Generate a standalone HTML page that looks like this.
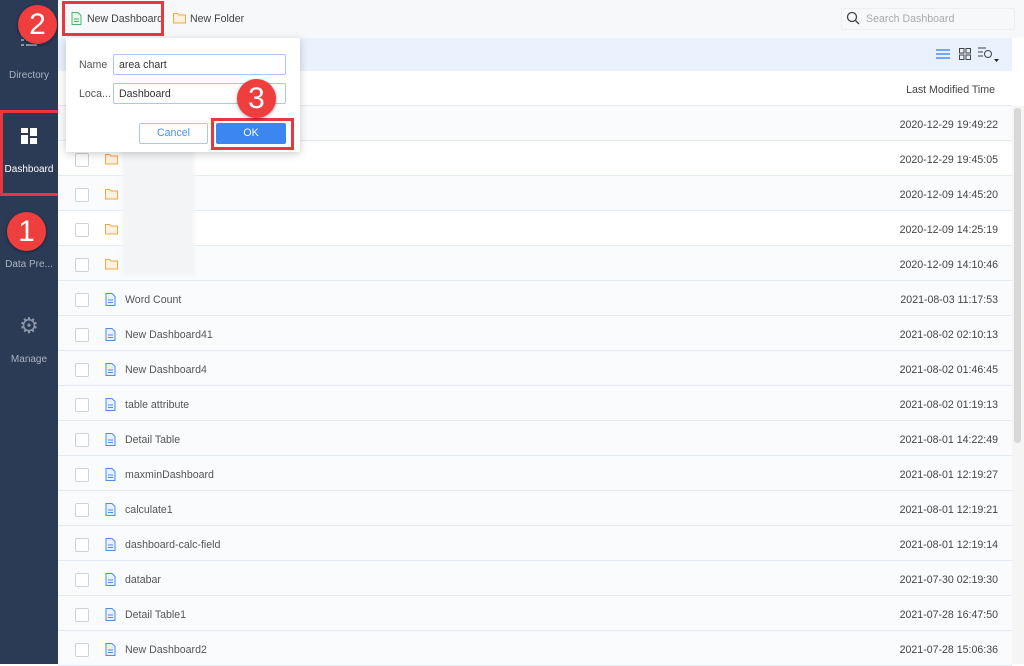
<!DOCTYPE html>
<html><head><meta charset="utf-8"><style>
*{box-sizing:border-box;margin:0;padding:0}
body{width:1024px;height:664px;overflow:hidden;font-family:"Liberation Sans",sans-serif;font-size:10.6px;color:#444;background:#fff;position:relative}
.side{position:absolute;left:0;top:0;width:58px;height:664px;background:#2b3a55}
.si{position:absolute;left:0;width:58px;text-align:center;color:#aab3c3;font-size:10px}
.top{position:absolute;left:58px;top:0;right:0;height:38px;background:#f7f8fa}
.band{position:absolute;left:58px;top:38px;width:954px;height:33px;background:#e8f1fc}
.hdr{position:absolute;left:58px;top:71px;width:954px;height:35px;background:#fff;border-bottom:1px solid #e3eaf5}
.row{position:absolute;left:58px;width:954px;height:35px;border-bottom:1px solid #e3eaf5;background:#fff}
.row:nth-child(odd){background:#fafbfd}
.cb{position:absolute;left:17px;top:12px;width:14px;height:14px;border:1px solid #cfd3d9;border-radius:2px;background:#fff}
.ic{position:absolute;left:47px;top:12px}
.nm{position:absolute;left:67px;top:13px;color:#555}
.tm{position:absolute;right:14px;top:13px;color:#444}
.badge{position:absolute;width:39px;height:39px;border-radius:50%;background:#ef3e3e;color:#fff;font-size:30px;text-align:center;line-height:39px;box-shadow:0 1px 3px rgba(0,0,0,.4)}
.rb{position:absolute;border:3px solid #e8383d}
</style></head><body>
<div class="side"></div>
<div class="si" style="top:32px"><svg width="18" height="14"><rect x="1" y="2" width="3" height="2" fill="#8a95a8"/><rect x="6" y="2" width="11" height="2" fill="#8a95a8"/><rect x="1" y="7" width="3" height="2" fill="#8a95a8"/><rect x="6" y="7" width="11" height="2" fill="#8a95a8"/><rect x="1" y="12" width="3" height="2" fill="#8a95a8"/><rect x="6" y="12" width="11" height="2" fill="#8a95a8"/></svg></div>
<div class="si" style="top:70px">Directory</div>
<div class="si" style="top:128px"><svg width="16" height="16"><rect x="0" y="0" width="7" height="5" fill="#fff"/><rect x="9" y="0" width="7" height="8" fill="#fff"/><rect x="0" y="7" width="7" height="9" fill="#fff"/><rect x="9" y="10" width="7" height="6" fill="#fff"/></svg></div>
<div class="si" style="top:164px;color:#fff">Dashboard</div>
<div class="si" style="top:259px">Data Pre...</div>
<div class="si" style="top:313px;font-size:22px;color:#8a95a8">⚙</div>
<div class="si" style="top:354px">Manage</div>
<div class="rb" style="left:0;top:110px;width:70px;height:86px"></div>
<div class="badge" style="left:7px;top:212px">1</div>

<div class="top"></div>
<svg style="position:absolute;left:71px;top:12px" width="11" height="13"><path d="M1 .5h6l3 3v9h-9z" fill="#e9f7ee" stroke="#4cb56d"/><path d="M3 7h5M3 9.5h5" stroke="#4cb56d"/></svg>
<div style="position:absolute;left:87px;top:13px;color:#444">New Dashboard</div>
<svg style="position:absolute;left:173px;top:12px" width="13" height="12"><path d="M.5 1.5h4l1.5 1.5h6.5v8h-12z" fill="#fdf1e0" stroke="#f0a844"/></svg>
<div style="position:absolute;left:190px;top:13px;color:#444">New Folder</div>
<div class="rb" style="left:62px;top:1px;width:102px;height:35px"></div>
<div class="badge" style="left:18px;top:5px">2</div>
<div style="position:absolute;left:841px;top:8px;width:174px;height:22px;border:1px solid #eceef2;border-radius:2px;background:#f7f8fa"></div>
<svg style="position:absolute;left:846px;top:11px" width="14" height="14"><circle cx="6" cy="6" r="4.5" fill="none" stroke="#444" stroke-width="1.3"/><path d="M9.5 9.5l3.5 3.5" stroke="#444" stroke-width="1.3"/></svg>
<div style="position:absolute;left:866px;top:13px;color:#aaa">Search Dashboard</div>

<div class="band"></div>
<svg style="position:absolute;left:936px;top:49px" width="14" height="11"><path d="M0 1h14M0 5h14M0 9h14" stroke="#4a8ff0" stroke-width="1.5"/></svg>
<svg style="position:absolute;left:959px;top:48px" width="12" height="12"><rect x=".5" y=".5" width="4.5" height="4.5" fill="none" stroke="#444"/><rect x="7" y=".5" width="4.5" height="4.5" fill="none" stroke="#444"/><rect x=".5" y="7" width="4.5" height="4.5" fill="none" stroke="#444"/><rect x="7" y="7" width="4.5" height="4.5" fill="none" stroke="#444"/></svg>
<svg style="position:absolute;left:978px;top:47px" width="22" height="16"><path d="M0 1h8M0 5h5M0 9h5" stroke="#444"/><circle cx="10" cy="7" r="3.5" fill="none" stroke="#444"/><path d="M16 12h5l-2.5 3z" fill="#222"/></svg>
<div class="hdr"><div style="position:absolute;right:17px;top:13px;color:#444">Last Modified Time</div></div>

<div style="position:absolute;left:0;top:106px">
<div class="row" style="top:0"><div class="cb"></div><div class="tm">2020-12-29 19:49:22</div></div>
<div class="row" style="top:35px"><div class="cb"></div><svg class="ic" width="13" height="12"><path d="M.5 1.5h4l1.5 1.5h6.5v8h-12z" fill="#fdf1e0" stroke="#f0a844"/></svg><div class="tm">2020-12-29 19:45:05</div></div>
<div class="row" style="top:70px"><div class="cb"></div><svg class="ic" width="13" height="12"><path d="M.5 1.5h4l1.5 1.5h6.5v8h-12z" fill="#fdf1e0" stroke="#f0a844"/></svg><div class="tm">2020-12-09 14:45:20</div></div>
<div class="row" style="top:105px"><div class="cb"></div><svg class="ic" width="13" height="12"><path d="M.5 1.5h4l1.5 1.5h6.5v8h-12z" fill="#fdf1e0" stroke="#f0a844"/></svg><div class="tm">2020-12-09 14:25:19</div></div>
<div class="row" style="top:140px"><div class="cb"></div><svg class="ic" width="13" height="12"><path d="M.5 1.5h4l1.5 1.5h6.5v8h-12z" fill="#fdf1e0" stroke="#f0a844"/></svg><div class="tm">2020-12-09 14:10:46</div></div>
</div>
<div style="position:absolute;left:122px;top:141px;width:72px;height:135px;background:#f3f4f6;filter:blur(2px)"></div>

<div style="position:absolute;left:0;top:281px">
<div class="row" style="top:0"><div class="cb"></div><svg class="ic" width="11" height="13"><path d="M1 .5h6l3 3v9h-9z" fill="#e8f1fd" stroke="#4a8ff0"/><path d="M3 7h5M3 9.5h5" stroke="#4a8ff0"/></svg><div class="nm">Word Count</div><div class="tm">2021-08-03 11:17:53</div></div>
<div class="row" style="top:35px;background:#fafbfd"><div class="cb"></div><svg class="ic" width="11" height="13"><path d="M1 .5h6l3 3v9h-9z" fill="#e8f1fd" stroke="#4a8ff0"/><path d="M3 7h5M3 9.5h5" stroke="#4a8ff0"/></svg><div class="nm">New Dashboard41</div><div class="tm">2021-08-02 02:10:13</div></div>
<div class="row" style="top:70px"><div class="cb"></div><svg class="ic" width="11" height="13"><path d="M1 .5h6l3 3v9h-9z" fill="#e8f1fd" stroke="#4a8ff0"/><path d="M3 7h5M3 9.5h5" stroke="#4a8ff0"/></svg><div class="nm">New Dashboard4</div><div class="tm">2021-08-02 01:46:45</div></div>
<div class="row" style="top:105px;background:#fafbfd"><div class="cb"></div><svg class="ic" width="11" height="13"><path d="M1 .5h6l3 3v9h-9z" fill="#e8f1fd" stroke="#4a8ff0"/><path d="M3 7h5M3 9.5h5" stroke="#4a8ff0"/></svg><div class="nm">table attribute</div><div class="tm">2021-08-02 01:19:13</div></div>
<div class="row" style="top:140px"><div class="cb"></div><svg class="ic" width="11" height="13"><path d="M1 .5h6l3 3v9h-9z" fill="#e8f1fd" stroke="#4a8ff0"/><path d="M3 7h5M3 9.5h5" stroke="#4a8ff0"/></svg><div class="nm">Detail Table</div><div class="tm">2021-08-01 14:22:49</div></div>
<div class="row" style="top:175px;background:#fafbfd"><div class="cb"></div><svg class="ic" width="11" height="13"><path d="M1 .5h6l3 3v9h-9z" fill="#e8f1fd" stroke="#4a8ff0"/><path d="M3 7h5M3 9.5h5" stroke="#4a8ff0"/></svg><div class="nm">maxminDashboard</div><div class="tm">2021-08-01 12:19:27</div></div>
<div class="row" style="top:210px"><div class="cb"></div><svg class="ic" width="11" height="13"><path d="M1 .5h6l3 3v9h-9z" fill="#e8f1fd" stroke="#4a8ff0"/><path d="M3 7h5M3 9.5h5" stroke="#4a8ff0"/></svg><div class="nm">calculate1</div><div class="tm">2021-08-01 12:19:21</div></div>
<div class="row" style="top:245px;background:#fafbfd"><div class="cb"></div><svg class="ic" width="11" height="13"><path d="M1 .5h6l3 3v9h-9z" fill="#e8f1fd" stroke="#4a8ff0"/><path d="M3 7h5M3 9.5h5" stroke="#4a8ff0"/></svg><div class="nm">dashboard-calc-field</div><div class="tm">2021-08-01 12:19:14</div></div>
<div class="row" style="top:280px"><div class="cb"></div><svg class="ic" width="11" height="13"><path d="M1 .5h6l3 3v9h-9z" fill="#e8f1fd" stroke="#4a8ff0"/><path d="M3 7h5M3 9.5h5" stroke="#4a8ff0"/></svg><div class="nm">databar</div><div class="tm">2021-07-30 02:19:30</div></div>
<div class="row" style="top:315px;background:#fafbfd"><div class="cb"></div><svg class="ic" width="11" height="13"><path d="M1 .5h6l3 3v9h-9z" fill="#e8f1fd" stroke="#4a8ff0"/><path d="M3 7h5M3 9.5h5" stroke="#4a8ff0"/></svg><div class="nm">Detail Table1</div><div class="tm">2021-07-28 16:47:50</div></div>
<div class="row" style="top:350px"><div class="cb"></div><svg class="ic" width="11" height="13"><path d="M1 .5h6l3 3v9h-9z" fill="#e8f1fd" stroke="#4a8ff0"/><path d="M3 7h5M3 9.5h5" stroke="#4a8ff0"/></svg><div class="nm">New Dashboard2</div><div class="tm">2021-07-28 15:06:36</div></div>
</div>
<div style="position:absolute;left:1012px;top:106px;width:12px;height:558px;background:#f5f5f5"></div>
<div style="position:absolute;left:1014px;top:108px;width:7px;height:335px;background:#d8d8d8;border-radius:3px"></div>

<div style="position:absolute;left:66px;top:38px;width:234px;height:114px;background:#fff;box-shadow:0 2px 8px rgba(0,0,0,.2)"></div>
<div style="position:absolute;left:79px;top:59px;color:#555">Name</div>
<div style="position:absolute;left:113px;top:54px;width:173px;height:21px;border:1px solid #a8c8f2;border-radius:2px;padding:4px 5px;color:#333">area chart</div>
<div style="position:absolute;left:79px;top:88px;color:#555">Loca...</div>
<div style="position:absolute;left:113px;top:83px;width:173px;height:21px;border:1px solid #a8c8f2;border-radius:2px;padding:4px 5px;color:#333">Dashboard</div>
<div style="position:absolute;left:139px;top:123px;width:69px;height:21px;border:1px solid #a8c8f2;border-radius:2px;color:#4a8ff0;text-align:center;line-height:19px">Cancel</div>
<div style="position:absolute;left:216px;top:123px;width:70px;height:21px;background:#3b86f0;border-radius:2px;color:#fff;text-align:center;line-height:21px">OK</div>
<div class="rb" style="left:211px;top:118px;width:83px;height:32px"></div>
<div class="badge" style="left:237px;top:79px">3</div>
</body></html>
